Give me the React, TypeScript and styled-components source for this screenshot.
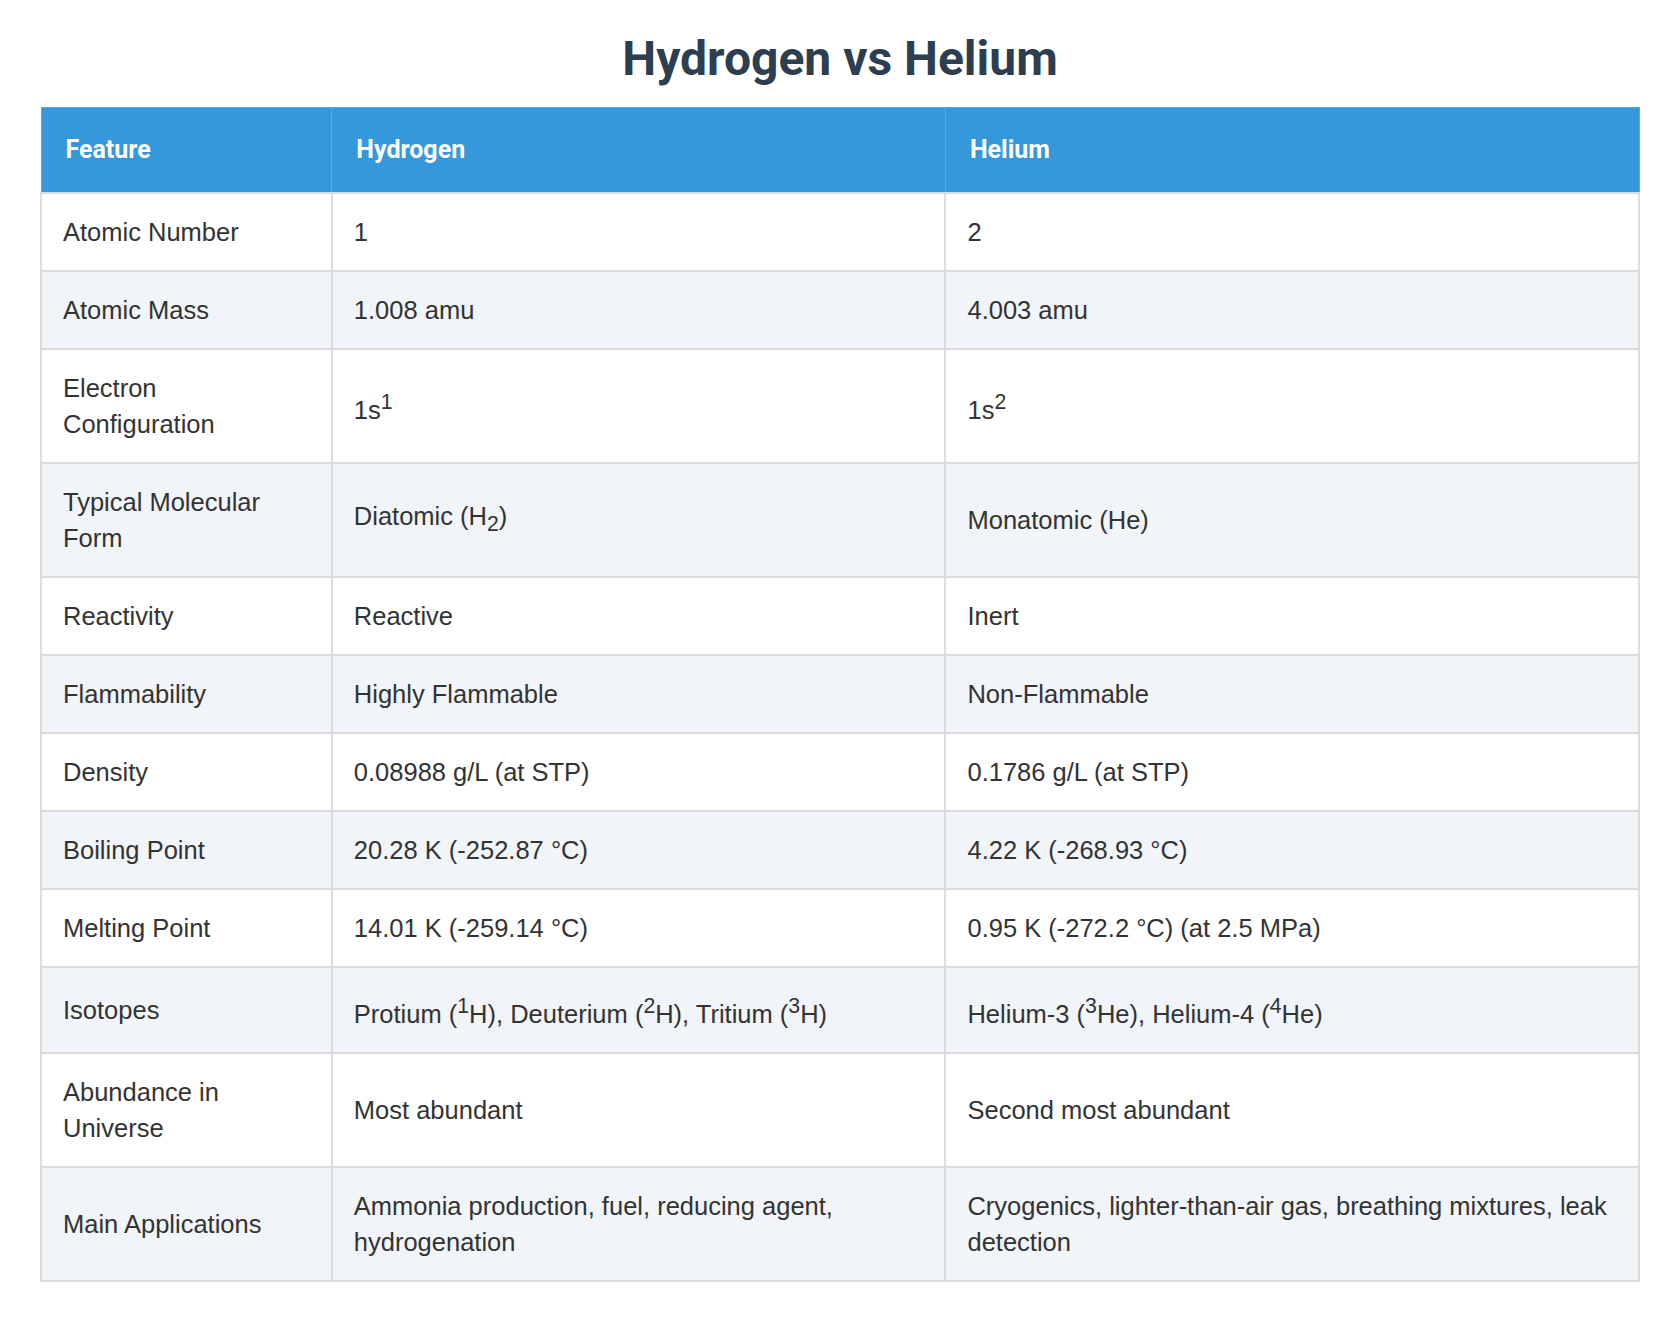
import React from "react";
import styled, { createGlobalStyle } from "styled-components";

const Global = createGlobalStyle`
  html, body { margin: 0; padding: 0; background: #fff; }
  body { font-family: "Liberation Sans", Arial, sans-serif; }
  *, *::before, *::after { box-sizing: border-box; }
`;

const Page = styled.div`
  padding: 0 40px;
`;

const Title = styled.h1`
  font-family: Roboto, "Liberation Sans", sans-serif;
  font-weight: 700;
  font-size: 48px;
  line-height: 58px;
  color: #2c3e50;
  text-align: center;
  margin: 30px 0 19px;
`;

const Table = styled.table`
  width: 100%;
  border-collapse: collapse;
  table-layout: fixed;
`;

const Th = styled.th<{ $w: string }>`
  width: ${(p) => p.$w};
  background: #3498db;
  color: #fff;
  font-family: Roboto, "Liberation Sans", sans-serif;
  font-weight: 700;
  font-size: 25px;
  line-height: 35px;
  text-align: left;
  padding: 24px 24px 25px;
  border: 1px solid #5aacdf;
`;

const Tr = styled.tr<{ $alt: boolean }>`
  background: ${(p) => (p.$alt ? "#f1f4f9" : "#ffffff")};
`;

const Td = styled.td`
  font-size: 25.5px;
  line-height: 36px;
  color: #333;
  padding: 20px 21px;
  border: 2px solid #dcdcdc;
  vertical-align: middle;
`;

const rows: [React.ReactNode, React.ReactNode, React.ReactNode][] = [
  ["Atomic Number", "1", "2"],
  ["Atomic Mass", "1.008 amu", "4.003 amu"],
  ["Electron Configuration", <>1s<sup>1</sup></>, <>1s<sup>2</sup></>],
  ["Typical Molecular Form", <>Diatomic (H<sub>2</sub>)</>, "Monatomic (He)"],
  ["Reactivity", "Reactive", "Inert"],
  ["Flammability", "Highly Flammable", "Non-Flammable"],
  ["Density", "0.08988 g/L (at STP)", "0.1786 g/L (at STP)"],
  ["Boiling Point", "20.28 K (-252.87 °C)", "4.22 K (-268.93 °C)"],
  ["Melting Point", "14.01 K (-259.14 °C)", "0.95 K (-272.2 °C) (at 2.5 MPa)"],
  [
    "Isotopes",
    <>Protium (<sup>1</sup>H), Deuterium (<sup>2</sup>H), Tritium (<sup>3</sup>H)</>,
    <>Helium-3 (<sup>3</sup>He), Helium-4 (<sup>4</sup>He)</>,
  ],
  ["Abundance in Universe", "Most abundant", "Second most abundant"],
  [
    "Main Applications",
    "Ammonia production, fuel, reducing agent, hydrogenation",
    "Cryogenics, lighter-than-air gas, breathing mixtures, leak detection",
  ],
];

export default function App() {
  return (
    <Page>
      <Global />
      <Title>Hydrogen vs Helium</Title>
      <Table>
        <thead>
          <tr>
            <Th $w="18.2%">Feature</Th>
            <Th $w="38.4%">Hydrogen</Th>
            <Th $w="43.4%">Helium</Th>
          </tr>
        </thead>
        <tbody>
          {rows.map((r, i) => (
            <Tr key={i} $alt={i % 2 === 1}>
              <Td>{r[0]}</Td>
              <Td>{r[1]}</Td>
              <Td>{r[2]}</Td>
            </Tr>
          ))}
        </tbody>
      </Table>
    </Page>
  );
}
